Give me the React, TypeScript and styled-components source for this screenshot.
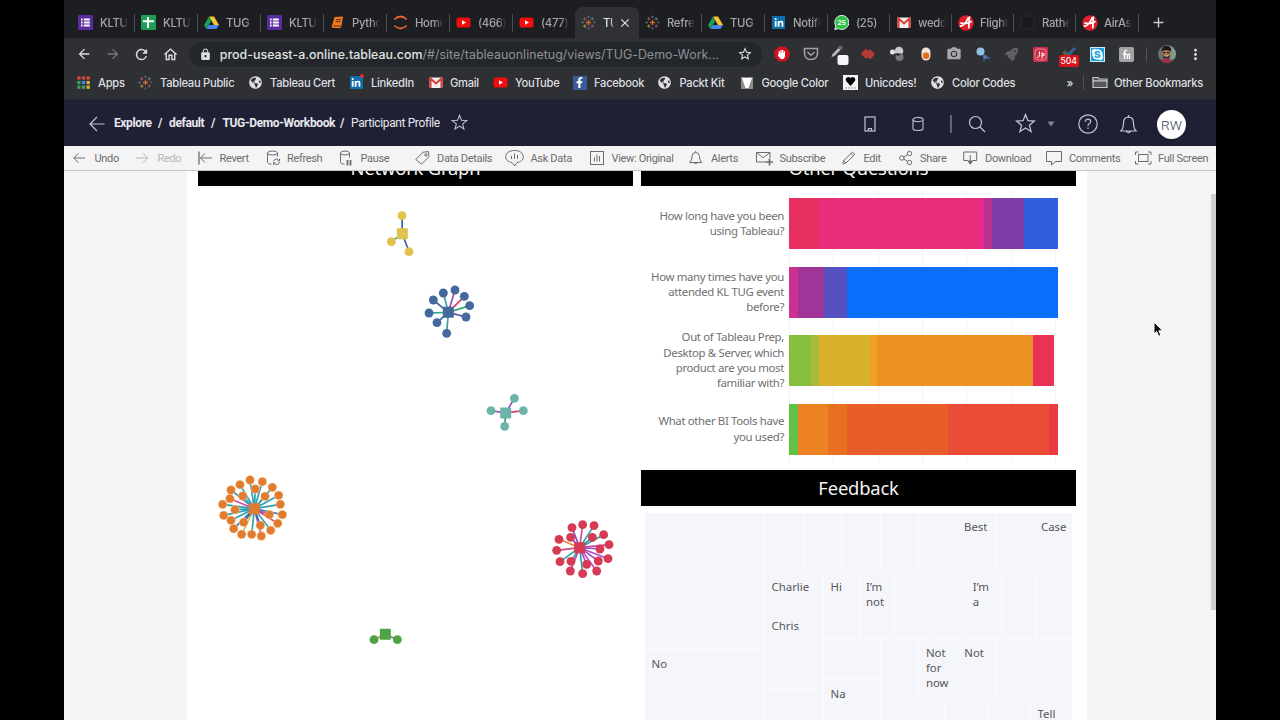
import React from 'react';
import styled, { createGlobalStyle } from 'styled-components';
import { MdArrowBack, MdArrowForward, MdRefresh, MdOutlineHome, MdLock, MdStarBorder, MdMoreVert, MdPhotoCamera, MdClose, MdAdd } from 'react-icons/md';
import { FaGlobeAmericas, FaLinkedinIn, FaFacebookF, FaRocket, FaSkype } from 'react-icons/fa';

const GlobalStyle = createGlobalStyle`
  * { box-sizing: border-box; }
  body { margin: 0; background: #000; overflow: hidden; }
`;

const ui = `Inter, "Liberation Sans", sans-serif`;
const benton = `Roboto, "Liberation Sans", sans-serif`;
const book = `"Noto Sans", "Open Sans", sans-serif`;

const Screen = styled.div`
  width: 1280px;
  height: 720px;
  padding: 0 64px;
  background: #000;
  overflow: hidden;
`;
const Browser = styled.div`
  position: relative;
  width: 1152px;
  height: 720px;
  display: flex;
  flex-direction: column;
  overflow: hidden;
  background: #f4f4f4;
`;

/* Tab strip */
const TabStrip = styled.div`
  display: flex;
  flex: none;
  height: 38px;
  padding: 7px 0 0 8px;
  background: #1d1e21;
`;
const Tab = styled.div<{ $w: number; $active?: boolean }>`
  flex: none;
  display: flex;
  align-items: center;
  width: ${p => p.$w}px;
  height: 31px;
  padding-left: 6px;
  border-radius: 7px 7px 0 0;
  background: ${p => (p.$active ? '#303135' : 'transparent')};
  color: ${p => (p.$active ? '#e4e5e7' : '#a5a6aa')};
  svg { flex: none; }
`;
const TabLabel = styled.span<{ $w: number }>`
  width: ${p => p.$w}px;
  margin-left: 7px;
  font: 500 11.3px/16px ${ui};
  letter-spacing: -0.3px;
  white-space: nowrap;
  overflow: hidden;
  mask-image: linear-gradient(90deg, #000 70%, transparent 100%);
`;
const TabRule = styled.i`
  width: 1px;
  height: 18px;
  margin-left: auto;
  background: #4c4d51;
`;
const CloseTab = styled(MdClose)`
  margin-left: 4px;
`;
const NewTab = styled.div`
  display: flex;
  align-items: center;
  padding-left: 11px;
  color: #c9cacc;
`;

/* Navigation bar */
const NavBar = styled.div`
  display: flex;
  flex: none;
  align-items: center;
  height: 32px;
  padding-left: 6px;
  background: #2f3034;
  color: #dcdddf;
`;
const NavButton = styled.span<{ $dim?: boolean }>`
  display: flex;
  justify-content: center;
  width: 28.7px;
  color: ${p => (p.$dim ? '#77787c' : '#dcdddf')};
`;
const Address = styled.div`
  display: flex;
  align-items: center;
  flex: none;
  width: 572px;
  height: 25px;
  margin: 0 6px 0 5px;
  padding: 0 9px;
  border-radius: 13px;
  background: #23262a;
`;
const Url = styled.span`
  flex: 1;
  margin-left: 8px;
  padding-top: 1px;
  color: #8f9195;
  font: 400 12.4px/20px ${ui};
  white-space: nowrap;
  letter-spacing: 0.03px;
  b { font-weight: 500; color: #e1e2e4; }
`;
const ExtSlot = styled.span`
  position: relative;
  display: flex;
  justify-content: center;
  flex: none;
  width: 28.7px;
`;
const Count = styled.span`
  position: absolute;
  left: 4px;
  top: 9px;
  width: 20px;
  height: 12px;
  border-radius: 2px;
  background: #d8131c;
  color: #fff;
  font: 500 8.6px/12px ${ui};
  text-align: center;
`;
const NavRule = styled.i<{ $m: number }>`
  flex: none;
  width: 1px;
  height: 15px;
  margin: 0 ${p => p.$m}px 0 5px;
  background: #505155;
`;

/* Bookmarks */
const Bookmarks = styled.div`
  display: flex;
  flex: none;
  align-items: center;
  height: 30px;
  padding: 0 0 4px 13px;
  background: #2f3034;
  border-bottom: 1px solid #262732;
  color: #dedfe1;
`;
const Bookmark = styled.div<{ $w: number; $i: number }>`
  display: flex;
  flex: none;
  align-items: center;
  width: ${p => p.$w}px;
  font: 500 11.2px/16px ${ui};
  letter-spacing: -0.28px;
  white-space: nowrap;
  > span { flex: none; display: flex; align-items: center; width: ${p => p.$i}px; }
`;

/* Site header */
const Header = styled.header`
  display: flex;
  flex: none;
  align-items: center;
  height: 46px;
  padding: 2px 0 0 25px;
  background: #1f2033;
  color: #e8e8ee;
`;
const Crumbs = styled.nav`
  display: flex;
  width: 346px;
  padding: 0 0 2px 9px;
  font: 700 12px/18px ${benton};
  letter-spacing: -0.38px;
  white-space: nowrap;
`;
const Crumb = styled.span<{ $w: number; $plain?: boolean }>`
  flex: none;
  width: ${p => p.$w}px;
  font-weight: ${p => (p.$plain ? 400 : 700)};
`;
const Favorite = styled.svg`
  margin-bottom: 3px;
`;
const HeaderIcons = styled.div`
  display: flex;
  align-items: center;
  margin-left: auto;
  padding-right: 30px;
`;
const HeaderSlot = styled.span<{ $w: number }>`
  display: flex;
  width: ${p => p.$w}px;
  padding-bottom: 1px;
`;
const Avatar = styled.span`
  width: 29px;
  height: 29px;
  border-radius: 50%;
  background: #fff;
  color: #2f4058;
  font: 300 13.6px/30px ${benton};
  text-align: center;
`;

/* View toolbar */
const Toolbar = styled.div`
  display: flex;
  flex: none;
  align-items: center;
  height: 25px;
  padding-left: 9px;
  background: #f4f4f4;
  border-bottom: 1px solid #c6c6c6;
`;
const Tool = styled.div<{ $w: number; $i: number; $off?: boolean }>`
  flex: none;
  display: flex;
  align-items: center;
  width: ${p => p.$w}px;
  color: ${p => (p.$off ? '#b5b5b5' : '#6c6c6c')};
  font: 400 11px/16px ${benton};
  letter-spacing: -0.33px;
  white-space: nowrap;
  > span { flex: none; display: flex; width: ${p => p.$i}px; }
`;
const ToolLabel = styled.div`
  padding-top: 1px;
`;

/* Dashboard */
const Viewport = styled.main`
  display: flex;
  height: 549px;
  overflow: hidden;
`;
const Dashboard = styled.div`
  display: flex;
  gap: 8px;
  width: 900px;
  height: 570px;
  margin: -21px 0 0 123px;
  padding: 0 11px;
  background: #fff;
`;
const Column = styled.section`
  width: 435px;
  display: flex;
  flex-direction: column;
`;
const Title = styled.h2`
  flex: none;
  height: 36px;
  margin: 0;
  background: #000;
  color: #f4f4f4;
  font: 400 18.4px/36px ${book};
  letter-spacing: -0.2px;
  text-align: center;
`;
const Scrollbar = styled.div`
  width: 5px;
  height: 416px;
  margin: 23px 0 0 auto;
  background: #cfcfcf;
`;
const Chart = styled.div`
  display: grid;
  grid-template-columns: 143px 1fr;
  grid-auto-rows: 68.5px;
  flex: none;
  height: 284px;
  padding-top: 3.5px;
`;
const Question = styled.div`
  display: flex;
  align-items: center;
  justify-content: flex-end;
  padding-bottom: 1.5px;
  text-align: right;
  white-space: pre;
  color: #6f6f6f;
  font: 400 11.4px/15.3px ${book};
  letter-spacing: -0.34px;
`;
const Plot = styled.div`
  display: flex;
  align-items: center;
  margin-left: 5px;
  background: repeating-linear-gradient(90deg, #f4f4f6 0 1px, transparent 1px 44.3px);
`;
const Bar = styled.div<{ $w: number }>`
  display: flex;
  width: ${p => p.$w}px;
  height: 51.3px;
`;
const Segment = styled.i<{ $n: number; $c: string }>`
  flex: ${p => p.$n} 0 0;
  background: ${p => p.$c};
`;

/* Feedback treemap */
const Split = styled.div<{ $dir: 'row' | 'column'; $n: number }>`
  display: flex;
  flex-direction: ${p => p.$dir};
  flex: ${p => p.$n} 0 0;
  min-width: 0;
  min-height: 0;
`;
const Treemap = styled.div`
  display: flex;
  flex: none;
  width: 428px;
  height: 208px;
  margin: 7px 0 0 4px;
`;
const CellBox = styled.div<{ $n: number }>`
  flex: ${p => p.$n} 0 0;
  min-width: 0;
  min-height: 0;
  background: #f5f6fb;
  box-shadow: inset -1px -1px 0 #fcfcfe;
`;
const CellText = styled.div`
  margin: 5.6px 0 0 6.5px;
  color: #555;
  font: 400 11.4px/15.3px ${book};
  white-space: pre;
`;
const Cell = ({ n, children }: { n: number; children?: React.ReactNode }) => (
  <CellBox $n={n}>{children && <CellText>{children}</CellText>}</CellBox>
);
const Pointer = styled.svg`
  position: absolute;
  left: 1089px;
  top: 321px;
`;

/* Favicons */
const Forms = () => (
  <svg width="15" height="15" viewBox="0 0 15 15"><rect width="15" height="15" rx="1" fill="#5a2ca0" /><path d="M3 4.500h1.600M3 7.500h1.600M3 10.500h1.600M5.800 4.500h6M5.800 7.500h6M5.800 10.500h6" stroke="#fff" strokeWidth="1.800" /></svg>
);
const Sheets = () => (
  <svg width="15" height="15" viewBox="0 0 15 15"><rect width="15" height="15" rx="1" fill="#1f9d55" /><path d="M2 6.300h11M7 2v11" stroke="#fff" strokeWidth="1.900" /></svg>
);
const Drive = () => (
  <svg width="15" height="15" viewBox="0 0 15 15"><path d="M5 1.500h5L15 10h-5z" fill="#f7c62f" /><path d="M5 1.500 0 10l2.500 4L7.500 5.700z" fill="#1f9d58" /><path d="M5 10h10l-2.500 4h-10z" fill="#4a85f0" /></svg>
);
const Book = () => (
  <svg width="15" height="15" viewBox="0 0 15 15"><path d="M4.500 2 13 1.500 11.500 11 10.500 13H2.500Q1 12 2 10.500z" fill="#ef7b1c" /><path d="M6 4.600h5M5.500 6.600h5M3 11h8" stroke="#5a3216" strokeWidth="1" fill="none" /></svg>
);
const Jupyter = () => (
  <svg width="15" height="15" viewBox="0 0 15 15"><path d="M1.200 4.500Q7.500-1.500 13.800 4.500M1.200 10.500Q7.500 16.500 13.800 10.500" fill="none" stroke="#e0652c" strokeWidth="1.700" /></svg>
);
const YouTube = () => (
  <svg width="15" height="15" viewBox="0 0 15 15"><rect x=".5" y="2.500" width="14" height="10" rx="2.600" fill="#f20d0d" /><path d="M6 5.200v4.600L10 7.500z" fill="#fff" /></svg>
);
const TableauMark = () => (
  <svg width="15" height="15" viewBox="0 0 15 15" fill="none" strokeWidth="1" opacity=".9">
    <path d="M7.500 5v5M5 7.500h5" stroke="#e8762d" strokeWidth="1.300" />
    <path d="M3.800 2.200v3.400M2.100 3.900h3.400" stroke="#b9574f" /><path d="M11.200 2.200v3.400M9.500 3.900h3.400" stroke="#5b8a8f" />
    <path d="M3.800 9.400v3.400M2.100 11.100h3.400" stroke="#c09146" /><path d="M11.200 9.400v3.400M9.500 11.100h3.400" stroke="#a15470" />
    <path d="M7.500 .5v2.600M6.200 1.800h2.600" stroke="#5c6a86" /><path d="M7.500 12v2.600M6.200 13.300h2.600" stroke="#4a5b95" />
    <path d="M1.600 6.300v2.400M.4 7.500h2.400" stroke="#577795" /><path d="M13.400 6.300v2.400M12.200 7.500h2.400" stroke="#4d5d8c" />
  </svg>
);
const InBox = styled.span<{ $c: string; $s: number }>`
  display: flex;
  flex: none;
  align-items: center;
  justify-content: center;
  width: ${p => p.$s}px;
  height: ${p => p.$s}px;
  background: ${p => p.$c};
  color: #fff;
`;
const NoticeDot = styled.i`
  position: absolute;
  right: -1px;
  top: -2px;
  width: 4px;
  height: 4px;
  border-radius: 50%;
  background: #d8303a;
`;
const Badged = styled.span`
  position: relative;
  display: flex;
`;
const LinkedIn = () => <InBox $c="#0c70ad" $s={13}><FaLinkedinIn size={10} /></InBox>;
const WhatsAppBadge = () => (
  <svg width="15" height="15" viewBox="0 0 15 15"><path d="M.8 14.500 1.800 11A7 7 0 1 1 4.500 13.600z" fill="#2fc24b" stroke="#e8f7ea" strokeWidth="1" /><text x="7.700" y="9.900" fontSize="6.500" fontWeight="700" fill="#fff" textAnchor="middle" fontFamily="Inter">25</text></svg>
);
const Gmail = () => (
  <svg width="14" height="15" viewBox="0 0 14 15"><rect x=".5" y="2.500" width="13" height="10.500" rx="1" fill="#eee" /><path d="M1.500 13V3.500L7 8.500l5.500-5V13" fill="none" stroke="#d93c34" strokeWidth="2" /></svg>
);
const AirAsia = () => (
  <svg width="16" height="16" viewBox="0 0 16 16"><circle cx="8" cy="8" r="7.700" fill="#de1f2a" /><path d="M2.500 11C5 12 9 6 10 3.200L11.300 2.500 10.800 12.500M3 8.200Q8 9.500 13 6.800" fill="none" stroke="#fff" strokeWidth="1.800" strokeLinecap="round" /></svg>
);
const BlankFavicon = () => <svg width="15" height="15" viewBox="0 0 15 15"><rect x="1" y="1" width="13" height="13" fill="#191a1c" stroke="#292a2d" /></svg>;

type TabItem = { icon: React.ReactNode; label: string; w: number; rule?: boolean };
const tabs: TabItem[] = [
  { icon: <Forms />, label: 'KLTU', w: 63, rule: true },
  { icon: <Sheets />, label: 'KLTU', w: 63, rule: true },
  { icon: <Drive />, label: 'TUG', w: 63, rule: true },
  { icon: <Forms />, label: 'KLTU', w: 63, rule: true },
  { icon: <Book />, label: 'Pytho', w: 63, rule: true },
  { icon: <Jupyter />, label: 'Home', w: 63, rule: true },
  { icon: <YouTube />, label: '(466)', w: 63, rule: true },
  { icon: <YouTube />, label: '(477)', w: 62 },
];
const tabsAfter: TabItem[] = [
  { icon: <TableauMark />, label: 'Refres', w: 63, rule: true },
  { icon: <Drive />, label: 'TUG', w: 63, rule: true },
  { icon: <LinkedIn />, label: 'Notific', w: 63, rule: true },
  { icon: <WhatsAppBadge />, label: '(25)', w: 62, rule: true },
  { icon: <Gmail />, label: 'wedd', w: 62, rule: true },
  { icon: <AirAsia />, label: 'Flight', w: 62, rule: true },
  { icon: <BlankFavicon />, label: 'Rathe', w: 62, rule: true },
  { icon: <AirAsia />, label: 'AirAsi', w: 62.5, rule: true },
];

const IconCell = styled.span`
  display: flex;
  justify-content: center;
  flex: none;
  width: 15px;
`;
const renderTab = (t: TabItem, i: number) => (
  <Tab key={i} $w={t.w}>
    <IconCell>{t.icon}</IconCell>
    <TabLabel $w={28}>{t.label}</TabLabel>
    {t.rule && <TabRule />}
  </Tab>
);

const appColors = ['#d34a3d', '#d34a3d', '#d34a3d', '#3fa35a', '#4285f4', '#e2b43a', '#3fa35a', '#3fa35a', '#e2b43a'];
const AppsGrid = () => (
  <svg width="13" height="13" viewBox="0 0 13 13">
    {appColors.map((c, i) => <rect key={i} x={(i % 3) * 4.6 + 0.3} y={Math.floor(i / 3) * 4.6 + 0.3} width="3.300" height="3.300" fill={c} />)}
  </svg>
);
const GoogleColor = () => (
  <svg width="12" height="12" viewBox="0 0 12 12"><rect width="12" height="12" fill="#8c8d8f" /><path d="M1 1h10L7.500 11h-3z" fill="#fff" /></svg>
);
const Heart = () => (
  <svg width="15" height="15" viewBox="0 0 15 15"><rect width="15" height="15" fill="#f4f4f4" /><path d="M7.500 11 3.300 6.200a2.500 2.500 0 0 1 4.200-3 2.500 2.500 0 0 1 4.200 3z" fill="#000" /><path d="M2 13h11" stroke="#999" strokeDasharray="2 1" /></svg>
);
const Folder = () => (
  <svg width="16" height="13" viewBox="0 0 16 13"><path d="M1 11.500V1.500h5l1 1.500h8v8.500zM1 4.800h14" fill="#55565a" stroke="#c8c9cb" strokeWidth="1.200" /></svg>
);
const bookmarks: { icon: React.ReactNode; label: string; w: number; i: number }[] = [
  { icon: <AppsGrid />, label: 'Apps', w: 61, i: 21 },
  { icon: <TableauMark />, label: 'Tableau Public', w: 110.5, i: 22 },
  { icon: <FaGlobeAmericas size={13} />, label: 'Tableau Cert', w: 101, i: 21.5 },
  { icon: <Badged><LinkedIn /><NoticeDot /></Badged>, label: 'LinkedIn', w: 79.5, i: 21.5 },
  { icon: <Gmail />, label: 'Gmail', w: 64, i: 21 },
  { icon: <YouTube />, label: 'YouTube', w: 79.5, i: 22 },
  { icon: <InBox $c="#3b5a9a" $s={14}><FaFacebookF size={11} /></InBox>, label: 'Facebook', w: 85.5, i: 21.5 },
  { icon: <FaGlobeAmericas size={13} />, label: 'Packt Kit', w: 83, i: 21.5 },
  { icon: <GoogleColor />, label: 'Google Color', w: 102, i: 20.5 },
  { icon: <Heart />, label: 'Unicodes!', w: 88, i: 22 },
  { icon: <FaGlobeAmericas size={13} />, label: 'Color Codes', w: 135.5, i: 21 },
];

/* Extension icons */
const Abp = () => (
  <svg width="16" height="16" viewBox="0 0 16 16"><path d="M5 .5h6L15.500 5v6L11 15.500H5L.5 11V5z" fill="#d5121e" /><path d="M5.300 8V5.300M7 7V4M8.700 7V4M10.400 8V5.300M5.300 7.500h5v3L9 12.300H7L4.600 9.500z" stroke="#fff" strokeWidth="1.300" fill="#fff" strokeLinejoin="round" /></svg>
);
const Pocket = () => (
  <svg width="16" height="16" viewBox="0 0 16 16" fill="none" stroke="#a2a3a6" strokeWidth="1.500"><path d="M1.500 2.500h13V7q0 6.500-6.500 6.500T1.500 7z" /><path d="m4.500 6 3.500 3.300L11.500 6" /></svg>
);
const Picker = () => (
  <svg width="20" height="22" viewBox="0 0 20 22"><path d="m2.500 14 1-3 6-6 2 2-6 6z" fill="#b9bbbd" /><path d="m8.500 4 3.500 3.500 2-3-2-2z" fill="#666" /><rect x="8.500" y="12" width="11" height="10" rx="2" fill="#f5f6f8" /></svg>
);
const RedMark = () => (
  <svg width="16" height="16" viewBox="0 0 16 16"><path d="M1 8 5.500 2.500l2.500 2 2.500-1L15 8l-4.500 5.500L8 11.500 5.500 12.500z" fill="#b33a35" /></svg>
);
const Spheres = () => (
  <svg width="16" height="16" viewBox="0 0 16 16"><circle cx="10" cy="5" r="4.300" fill="#c9cbcd" /><circle cx="10.500" cy="11" r="4" fill="#77797c" /><circle cx="3.500" cy="6" r="2.500" fill="#e3e4e6" /><path d="m7 7 5 1.500-4 1.500z" fill="#222" /></svg>
);
const Capsule = () => (
  <svg width="16" height="16" viewBox="0 0 16 16"><rect x="3.500" y="1.500" width="9" height="13" rx="4.500" fill="#efe3d6" /><circle cx="8" cy="9.700" r="3.200" fill="#e2691d" /></svg>
);
const Molecule = () => (
  <svg width="16" height="16" viewBox="0 0 16 16"><path d="m5 6 7 6" stroke="#4b6a93" strokeWidth="1.500" /><circle cx="5.500" cy="5.500" r="4" fill="#8fc0dd" /><circle cx="10" cy="11" r="2" fill="#5a7cab" /><circle cx="13.500" cy="12" r="1.600" fill="#465a90" /><circle cx="9" cy="14.500" r="1" fill="#465a90" /></svg>
);
const RedSquare = () => (
  <svg width="15" height="15" viewBox="0 0 15 15"><rect width="15" height="15" rx="1.500" fill="#cb3049" /><rect x="2" y="2" width="11" height="11" rx="3" fill="none" stroke="#eea0ac" strokeWidth=".7" /><path d="M4 10.500Q7 11 6.500 4.500M9 5.500v6M9 6.500q3-1 2 2L9 9" stroke="#fff" fill="none" /></svg>
);
const CheckMark = () => (
  <svg width="16" height="16" viewBox="0 0 16 16"><path d="m2 6 4 4 3-3" stroke="#a83c34" strokeWidth="2.500" fill="none" /><path d="m7 9 7-7" stroke="#34659b" strokeWidth="3" /><path d="m3 5 3 3" stroke="#30734c" strokeWidth="2.500" /></svg>
);
const SkypeTile = styled(InBox)`
  background: #1b9fe0;
  border: 1px solid #cfe9f8;
`;
const HoneyMark = () => (
  <svg width="15" height="15" viewBox="0 0 15 15"><rect width="15" height="15" rx="2" fill="#a2a3a5" /><path d="M5.500 12V5.500Q5.500 3 8 3.500M3.800 7h4M8.300 12V8M8.300 8Q10.500 6 10.500 8.500V12" stroke="#fff" strokeWidth="1.300" fill="none" /></svg>
);
const Profile = () => (
  <svg width="18" height="18" viewBox="0 0 18 18"><defs><clipPath id="face"><circle cx="9" cy="9" r="9" /></clipPath></defs><g clipPath="url(#face)"><rect width="18" height="18" fill="#68756f" /><path d="M12 0v14h6V0z" fill="#819c8c" /><ellipse cx="8.500" cy="7.500" rx="4.500" ry="5.500" fill="#a97659" /><path d="M3.500 6.500Q4 0 9 .8T13 6.500Q8 3.500 3.500 6.500" fill="#211a1a" /><path d="M4.800 7.700h2.700M9 7.700h2.700" stroke="#2a2021" strokeWidth="1.300" /><path d="M4.500 10q4 2.500 8 0l-1.500 3.500H6z" fill="#332523" /><path d="M6.500 11h4" stroke="#eee" strokeWidth=".8" /><path d="M1 18q2-5 7-4.500t9 4.500z" fill="#a52b43" /></g></svg>
);

/* View toolbar icons */
const Ico = ({ w, children }: { w: number; children: React.ReactNode }) => (
  <svg width={w} height="18" viewBox={`0 0 ${w} 18`} fill="none" stroke="currentColor" strokeWidth="1">{children}</svg>
);
const tools: { icon: React.ReactNode; label: string; w: number; i: number; off?: boolean }[] = [
  { icon: <Ico w={13}><path d="M12 9H.8M5.500 4.200.8 9l4.700 4.800" /></Ico>, label: 'Undo', w: 63, i: 21.5 },
  { icon: <Ico w={13}><path d="M0 9h11.500M7 4.200 11.700 9 7 13.800" /></Ico>, label: 'Redo', w: 61.5, i: 21.5, off: true },
  { icon: <Ico w={15}><path d="M1 2.500v13" strokeWidth="1.300" /><path d="M14 9H2.500M7 4.500 2.500 9 7 13.500" /></Ico>, label: 'Revert', w: 69, i: 22 },
  { icon: <Ico w={14}><path d="M.5 4v9.500q0 1.500 4 1.700M10.500 4v3.500" /><ellipse cx="5.500" cy="4" rx="5" ry="2" /><path d="M6.500 12.500q.5-2.500 3-2.500 1.800 0 2.700 1.500M12.500 9.800v2h-2M12.500 13q-.5 2.500-3 2.500-1.800 0-2.700-1.500M6.500 15.800v-2h2" /></Ico>, label: 'Refresh', w: 73, i: 20.5 },
  { icon: <Ico w={14}><path d="M.5 4v9.500q0 1.500 4 1.700M9.500 4v4.500" /><ellipse cx="5" cy="4" rx="4.500" ry="2" /><path d="M7.500 11v5.500M10.500 11v5.500" strokeWidth="1.800" /></Ico>, label: 'Pause', w: 75.5, i: 21 },
  { icon: <Ico w={16}><path d="M.8 10.500 8 3.200l5.500-.6.5 5L6.500 15.200z" strokeLinejoin="round" /><circle cx="11" cy="6" r="1.200" /></Ico>, label: 'Data Details', w: 90, i: 22 },
  { icon: <Ico w={19}><path d="M7 13.500C3 13 .7 10.800.7 7.800.7 4 4.500 1.500 9.500 1.500S18.300 4 18.300 7.800c0 3.200-2.500 5.200-6.300 5.700L9.800 17z" /><path d="M6.500 6.800V10M9.500 4.500V10M12.500 6V10" /></Ico>, label: 'Ask Data', w: 85, i: 25.5 },
  { icon: <Ico w={14}><rect x=".5" y="2.500" width="13" height="13" /><path d="M4.500 8.500v4M7 5.500v7M9.500 7v5.500" /></Ico>, label: 'View: Original', w: 98.5, i: 21.5 },
  { icon: <Ico w={14}><path d="M.7 13.500Q3 11.500 3 7.500 3 3.500 6.700 3.500T10.500 7.500Q10.500 11.500 12.800 13.500zM5 13.700q1.700 2 3.400 0M6.700 3.500V2" /></Ico>, label: 'Alerts', w: 67.5, i: 22.5 },
  { icon: <Ico w={18}><path d="M10 13H.5V3.500H14V9M.7 3.700l6.500 5 6.600-5" /><path d="M13.500 9.500v7M10 13h7" strokeWidth="1.700" /></Ico>, label: 'Subscribe', w: 85.5, i: 23.5 },
  { icon: <Ico w={14}><path d="m.8 15 1-3.500L10.500 3l2.300 2.300L4 14zM9 4.500l2.300 2.300M1.800 11.500 4 14" /></Ico>, label: 'Edit', w: 57, i: 22 },
  { icon: <Ico w={14}><circle cx="2.800" cy="9" r="2.200" /><circle cx="10.500" cy="4.500" r="2.200" /><circle cx="10.500" cy="13.500" r="2.200" /><path d="m4.800 8 3.700-2.300M4.800 10l3.700 2.300" /></Ico>, label: 'Share', w: 64, i: 21.5 },
  { icon: <Ico w={15}><path d="M5 11.500H.7V3h13v8.500H9.500" /><path d="M7.200 6v8" /><path d="m5 12 2.200 3.200L9.500 12z" fill="currentColor" /></Ico>, label: 'Download', w: 83, i: 22.5 },
  { icon: <Ico w={16}><path d="M.5 2.500h15v10H9.500L5.500 16v-3.500h-5z" /></Ico>, label: 'Comments', w: 89, i: 23.5 },
  { icon: <Ico w={17}><path d="M.5 6V3h3M13 3h3v3M16 12v3h-3M3.500 15h-3v-3" /><rect x="3.500" y="5.500" width="9.500" height="7" /></Ico>, label: 'Full Screen', w: 75, i: 23.5 },
];

const stroke = { fill: 'none', stroke: '#c3c4cf', strokeWidth: 1.2 };
const star = 'M10 1.500 12.300 7.300 18.500 7.700 13.700 11.600 15.300 17.700 10 14.300 4.700 17.700 6.300 11.600 1.500 7.700 7.700 7.300z';

/* Network graph */
type Cluster = { x: number; y: number; c: string; hub: [number, number]; halo?: string; nodes: [number, number][]; links: string[] };
const clusters: Cluster[] = [
  { x: 380, y: 200, c: '#e0c34a', hub: [67, 101], nodes: [[66, 47], [34, 125], [87, 155]], links: ['#3f5fa8', '#4ba6a0', '#3f5fa8'] },
  {
    x: 380, y: 200, c: '#44699c', hub: [205, 337],
    nodes: [[190, 279], [225, 270], [253, 289], [269, 317], [258, 351], [200, 400], [171, 368], [147, 339], [160, 300]],
    links: ['#36a2b4', '#9a4fb0', '#dd3a73', '#35a874', '#5358a8', '#2fa793', '#4a5b9c', '#2fa793', '#4467a0'],
  },
  { x: 380, y: 200, c: '#6cb5a8', hub: [377, 639], nodes: [[403, 595], [430, 632], [374, 679], [333, 632]], links: ['#9150b4', '#e23a6f', '#2c9c84', '#9150b4'] },
  {
    x: 205, y: 465, c: '#e07b30', halo: '#fbe0b4', hub: [148, 131],
    nodes: [[135, 45], [172, 50], [202, 67], [221, 91], [226, 118], [232, 149], [218, 175], [197, 196], [169, 213], [140, 208], [110, 208], [86, 191], [78, 166], [56, 151], [53, 118], [75, 101], [78, 75], [105, 59], [151, 72], [180, 94], [113, 93], [90, 134], [116, 172], [166, 181], [193, 149]],
    links: ['#2d9fb2', '#2d9fb2', '#2d9fb2', '#2d9fb2', '#2d9fb2', '#3b7fb5', '#e23a7c', '#2d9fb2', '#a44fb2', '#2d9fb2', '#cfc03a', '#3b6fb5', '#2d9fb2', '#2d9fb2', '#2d9fb2', '#d34aa8', '#2d9fb2', '#2d9fb2', '#2d9fb2', '#2d9fb2', '#2d9fb2', '#2d9fb2', '#3b5fb5', '#3b5fb5', '#a44fb2'],
  },
  {
    x: 540, y: 510, c: '#d63a55', hub: [119, 113],
    nodes: [[96, 53], [128, 44], [162, 47], [191, 74], [207, 104], [204, 146], [175, 153], [170, 183], [128, 191], [140, 163], [93, 154], [91, 183], [60, 155], [50, 121], [57, 88], [92, 82], [157, 82], [180, 117]],
    links: ['#8a50b4', '#c74aa0', '#2f9f9f', '#2f9f9f', '#c74ab0', '#a44fc2', '#a44fc2', '#c74ac0', '#2f9fb0', '#b44fb2', '#2f9f9f', '#a44fb2', '#2f9f9f', '#d04a80', '#e8853a', '#a44fb2', '#2f9f9f', '#a44fc2'],
  },
  { x: 205, y: 465, c: '#4ea444', hub: [541, 508], nodes: [[507, 524], [577, 524]], links: ['#b89138', '#8a6fa4'] },
];
const Network = () => (
  <svg width="435" height="534" viewBox="198 186 435 534">
    {clusters.map((k, i) => (
      <g key={i} transform={`translate(${k.x} ${k.y}) scale(.33333)`}>
        {k.nodes.map((n, j) => <line key={j} x1={k.hub[0]} y1={k.hub[1]} x2={n[0]} y2={n[1]} stroke={k.links[j]} strokeWidth="5" />)}
        {k.nodes.map((n, j) => <circle key={j} cx={n[0]} cy={n[1]} r="13.300" fill={k.c} stroke={k.halo ?? 'none'} strokeWidth="1.500" />)}
        <rect x={k.hub[0] - 16.5} y={k.hub[1] - 16.5} width="33" height="33" rx="3" fill={k.c} />
      </g>
    ))}
  </svg>
);

const questions: { text: string; w: number; segs: [number, string][] }[] = [
  { text: 'How long have you been\nusing Tableau?', w: 269.3, segs: [[91, '#e82f62'], [475, '#e82d79'], [19, '#e8298c'], [24, '#b93291'], [95, '#7d3fa7'], [104, '#2f5fdd']] },
  { text: 'How many times have you\nattended KL TUG event\nbefore?', w: 269.3, segs: [[27, '#cd318f'], [78, '#a03498'], [68, '#5750c0'], [635, '#0a6ffa']] },
  { text: 'Out of Tableau Prep,\nDesktop & Server, which\nproduct are you most\nfamiliar with?', w: 265, segs: [[67, '#86bf3c'], [24, '#adb938'], [151, '#d9b22d'], [22, '#f0a128'], [467, '#ec9124'], [64, '#ec3157']] },
  { text: 'What other BI Tools have\nyou used?', w: 269.3, segs: [[26, '#5fc244'], [91, '#ec8222'], [56, '#e8701f'], [303, '#e95d29'], [305, '#ea4c36'], [27, '#ea3b43']] },
];

export default function App() {
  return (
    <Screen>
      <GlobalStyle />
      <Browser>
        <TabStrip>
          {tabs.map(renderTab)}
          <Tab $w={64} $active>
            <IconCell><TableauMark /></IconCell>
            <TabLabel $w={11}>TU</TabLabel>
            <CloseTab size={14} />
          </Tab>
          {tabsAfter.map(renderTab)}
          <NewTab><MdAdd size={17} /></NewTab>
        </TabStrip>
        <NavBar>
          <NavButton><MdArrowBack size={16} /></NavButton>
          <NavButton $dim><MdArrowForward size={16} /></NavButton>
          <NavButton><MdRefresh size={17} /></NavButton>
          <NavButton><MdOutlineHome size={17} /></NavButton>
          <Address>
            <MdLock size={13} />
            <Url><b>prod-useast-a.online.tableau.com</b>/#/site/tableauonlinetug/views/TUG-Demo-Work...</Url>
            <MdStarBorder size={16} />
          </Address>
          <ExtSlot><Abp /></ExtSlot>
          <ExtSlot><Pocket /></ExtSlot>
          <ExtSlot><Picker /></ExtSlot>
          <ExtSlot><RedMark /></ExtSlot>
          <ExtSlot><Spheres /></ExtSlot>
          <ExtSlot><Capsule /></ExtSlot>
          <ExtSlot><MdPhotoCamera size={16} color="#a7a8ab" /></ExtSlot>
          <ExtSlot><Molecule /></ExtSlot>
          <ExtSlot><FaRocket size={13} color="#606165" /></ExtSlot>
          <ExtSlot><RedSquare /></ExtSlot>
          <ExtSlot><CheckMark /><Count>504</Count></ExtSlot>
          <ExtSlot><SkypeTile $c="#1b9fe0" $s={15}><FaSkype size={13} color="#f2fafe" /></SkypeTile></ExtSlot>
          <ExtSlot><HoneyMark /></ExtSlot>
          <NavRule $m={6} />
          <ExtSlot><Profile /></ExtSlot>
          <ExtSlot><MdMoreVert size={17} /></ExtSlot>
        </NavBar>
        <Bookmarks>
          {bookmarks.map((b, i) => <Bookmark key={i} $w={b.w} $i={b.i}><span>{b.icon}</span>{b.label}</Bookmark>)}
          <Bookmark $w={11} $i={0}>»</Bookmark>
          <NavRule $m={8.5} />
          <Bookmark $w={120} $i={22}><span><Folder /></span>Other Bookmarks</Bookmark>
        </Bookmarks>
        <Header>
          <svg width="16" height="18" viewBox="0 0 16 18" {...stroke}><path d="M15.500 9H1M8 2 1 9l7 7" /></svg>
          <Crumbs>
            <Crumb $w={44}>Explore</Crumb><Crumb $w={11}>/</Crumb>
            <Crumb $w={42}>default</Crumb><Crumb $w={11.5}>/</Crumb>
            <Crumb $w={117.5}>TUG-Demo-Workbook</Crumb><Crumb $w={11}>/</Crumb>
            <Crumb $w={99} $plain>Participant Profile</Crumb>
          </Crumbs>
          <Favorite width="17" height="17" viewBox="0 0 20 20" {...stroke}><path d={star} /></Favorite>
          <HeaderIcons>
            <HeaderSlot $w={47.5}><svg width="12" height="18" viewBox="0 0 12 18" {...stroke}><rect x="1" y="2" width="10" height="14" /><path d="M4.500 16v-2.500h3V16" /></svg></HeaderSlot>
            <HeaderSlot $w={38}><svg width="12" height="18" viewBox="0 0 12 18" {...stroke} opacity=".9"><ellipse cx="6" cy="4.500" rx="5" ry="2.200" /><path d="M1 4.500v9q0 2 5 2t5-2v-9" /></svg></HeaderSlot>
            <HeaderSlot $w={18.5}><svg width="2" height="18" viewBox="0 0 2 18" {...stroke} opacity=".7"><path d="M1 0v18" /></svg></HeaderSlot>
            <HeaderSlot $w={47}><svg width="18" height="18" viewBox="0 0 18 18" {...stroke}><circle cx="7.500" cy="7.500" r="6" /><path d="m12 12 5 5" /></svg></HeaderSlot>
            <HeaderSlot $w={32}><svg width="21" height="21" viewBox="0 0 20 20" {...stroke}><path d={star} /></svg></HeaderSlot>
            <HeaderSlot $w={31}><svg width="8" height="6" viewBox="0 0 8 6"><path d="M.5.5h7L4 5.500z" fill="#85868f" /></svg></HeaderSlot>
            <HeaderSlot $w={41.5}><svg width="20" height="20" viewBox="0 0 20 20" {...stroke}><circle cx="10" cy="10" r="9.200" /><path d="M7.300 7.700Q7.300 5.200 10 5.200T12.700 7.700Q12.700 9 10.800 10 10 10.500 10 12M10 13.500v1.500" /></svg></HeaderSlot>
            <HeaderSlot $w={37.5}><svg width="17" height="20" viewBox="0 0 17 20" {...stroke}><path d="M.8 17Q3.500 14.500 3.500 9 3.500 3.200 8.500 3.200T13.500 9Q13.500 14.500 16.200 17zM6.200 17.300q2.300 2.500 4.600 0M8.500 3V1" /></svg></HeaderSlot>
            <Avatar>RW</Avatar>
          </HeaderIcons>
        </Header>
        <Toolbar>
          {tools.map(t => <Tool key={t.label} $w={t.w} $i={t.i} $off={t.off}><span>{t.icon}</span><ToolLabel>{t.label}</ToolLabel></Tool>)}
        </Toolbar>
        <Viewport>
          <Dashboard>
            <Column>
              <Title>Network Graph</Title>
              <Network />
            </Column>
            <Column>
              <Title>Other Questions</Title>
              <Chart>
                {questions.map(q => (
                  <React.Fragment key={q.text}>
                    <Question>{q.text}</Question>
                    <Plot><Bar $w={q.w}>{q.segs.map(([n, c], i) => <Segment key={i} $n={n} $c={c} />)}</Bar></Plot>
                  </React.Fragment>
                ))}
              </Chart>
              <Title>Feedback</Title>
              <Treemap>
                <Split $dir="column" $n={120}><Cell n={137} /><Cell n={71}>No</Cell></Split>
                <Split $dir="column" $n={308}>
                  <Split $dir="row" $n={60}>
                    <Cell n={1} /><Cell n={1} /><Cell n={1} /><Cell n={1} /><Cell n={1} /><Cell n={1}>Best</Cell><Cell n={1} /><Cell n={1}>Case</Cell>
                  </Split>
                  <Split $dir="row" $n={148}>
                    <Split $dir="column" $n={59}><Cell n={39.5}>Charlie</Cell><Cell n={39}>Chris</Cell><Cell n={38.5} /><Cell n={31} /></Split>
                    <Split $dir="column" $n={249}>
                      <Split $dir="row" $n={66}>
                        <Cell n={1}>Hi</Cell><Cell n={1}>{'I’m\nnot'}</Cell><Cell n={1} /><Cell n={1} /><Cell n={1}>{'I’m\na'}</Cell><Cell n={1} /><Cell n={1} />
                      </Split>
                      <Split $dir="row" $n={82}>
                        <Split $dir="column" $n={57}><Cell n={41} /><Cell n={41}>Na</Cell></Split>
                        <Split $dir="column" $n={192}>
                          <Split $dir="row" $n={61}><Cell n={1} /><Cell n={1}>{'Not\nfor\nnow'}</Cell><Cell n={1}>Not</Cell><Cell n={1} /><Cell n={1} /></Split>
                          <Split $dir="row" $n={21}><Cell n={64} /><Cell n={43} /><Cell n={43} /><Cell n={42}>Tell</Cell></Split>
                        </Split>
                      </Split>
                    </Split>
                  </Split>
                </Split>
              </Treemap>
            </Column>
          </Dashboard>
          <Scrollbar />
        </Viewport>
        <Pointer width="11" height="17" viewBox="0 0 11 17"><path d="M1 1v12l2.700-2.400 2 4.700 2.200-1-2-4.500h3.800z" fill="#111" stroke="#fff" strokeWidth="1" /></Pointer>
      </Browser>
    </Screen>
  );
}
